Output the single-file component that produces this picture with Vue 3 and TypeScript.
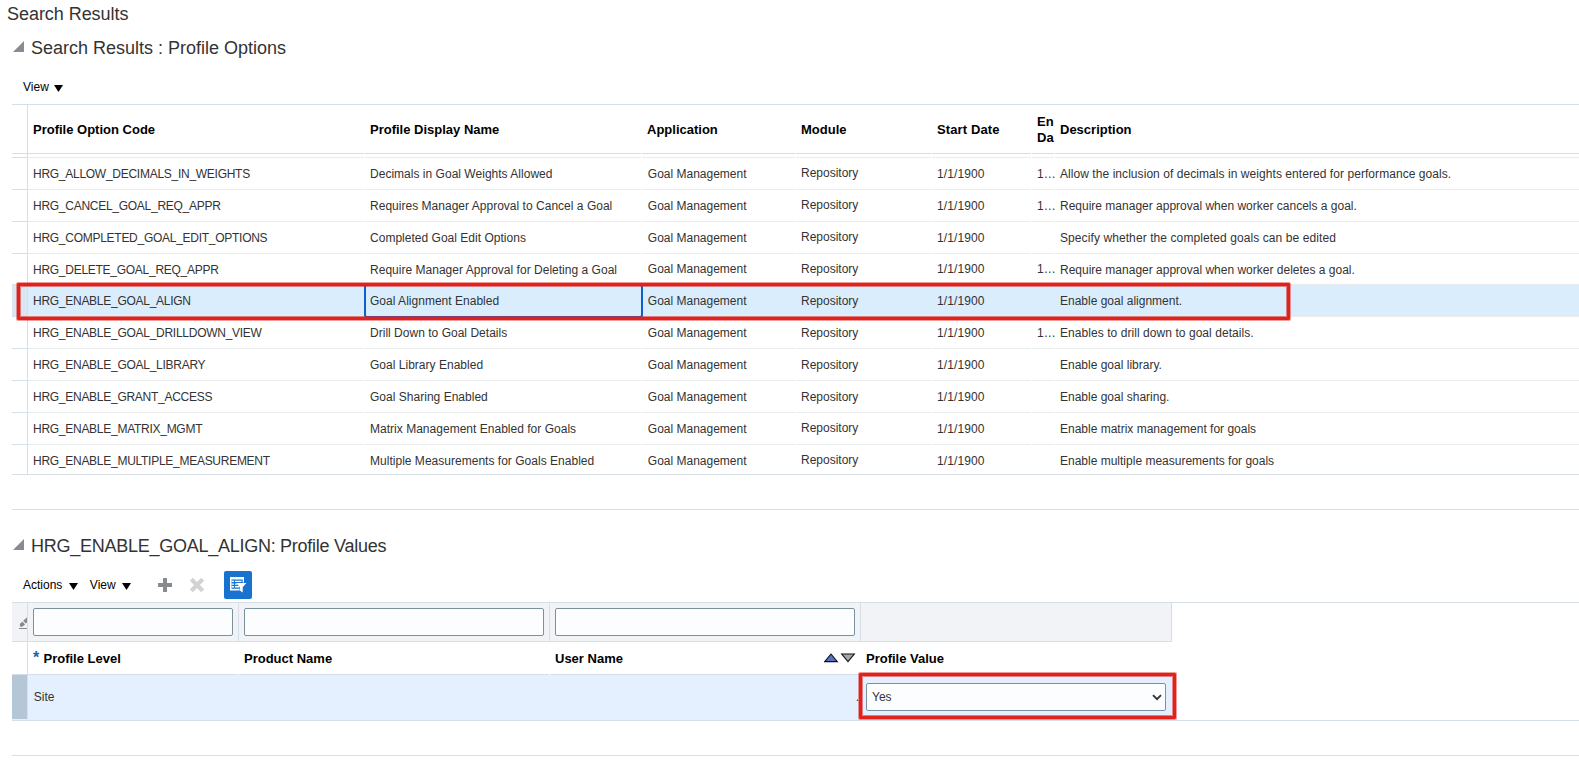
<script setup lang="ts">
import { ref } from 'vue'

interface ProfileOption {
  code: string
  name: string
  start: string
  end: string
  description: string
  tone?: string
  raised?: string[]
}

const options: ProfileOption[] = [
  { code: 'HRG_ALLOW_DECIMALS_IN_WEIGHTS', name: 'Decimals in Goal Weights Allowed', start: '1/1/1900', end: '1…', description: 'Allow the inclusion of decimals in weights entered for performance goals.', tone: 'loose', raised: ['module'] },
  { code: 'HRG_CANCEL_GOAL_REQ_APPR', name: 'Requires Manager Approval to Cancel a Goal', start: '1/1/1900', end: '1…', description: 'Require manager approval when worker cancels a goal.', raised: ['module'] },
  { code: 'HRG_COMPLETED_GOAL_EDIT_OPTIONS', name: 'Completed Goal Edit Options', start: '1/1/1900', end: '', description: 'Specify whether the completed goals can be edited', tone: 'looser', raised: ['module'] },
  { code: 'HRG_DELETE_GOAL_REQ_APPR', name: 'Require Manager Approval for Deleting a Goal', start: '1/1/1900', end: '1…', description: 'Require manager approval when worker deletes a goal.', raised: ['application', 'module', 'start', 'end'] },
  { code: 'HRG_ENABLE_GOAL_ALIGN', name: 'Goal Alignment Enabled', start: '1/1/1900', end: '', description: 'Enable goal alignment.' },
  { code: 'HRG_ENABLE_GOAL_DRILLDOWN_VIEW', name: 'Drill Down to Goal Details', start: '1/1/1900', end: '1…', description: 'Enables to drill down to goal details.', tone: 'loose' },
  { code: 'HRG_ENABLE_GOAL_LIBRARY', name: 'Goal Library Enabled', start: '1/1/1900', end: '', description: 'Enable goal library.' },
  { code: 'HRG_ENABLE_GRANT_ACCESS', name: 'Goal Sharing Enabled', start: '1/1/1900', end: '', description: 'Enable goal sharing.' },
  { code: 'HRG_ENABLE_MATRIX_MGMT', name: 'Matrix Management Enabled for Goals', start: '1/1/1900', end: '', description: 'Enable matrix management for goals', raised: ['module'] },
  { code: 'HRG_ENABLE_MULTIPLE_MEASUREMENT', name: 'Multiple Measurements for Goals Enabled', start: '1/1/1900', end: '', description: 'Enable multiple measurements for goals', raised: ['module'] },
]

const selectedCode = ref('HRG_ENABLE_GOAL_ALIGN')
const level = ref('')
const product = ref('')
const user = ref('')
const up = (o: ProfileOption, column: string) => ({ up: o.raised?.includes(column) })
</script>

<template>
  <main class="page">
    <h1 class="title">Search Results</h1>

    <section class="options">
      <h2 class="heading">
        <svg class="disclose" width="11" height="11" viewBox="0 0 11 11"><path d="M0 11 11 0V11Z" /></svg>
        Search Results : Profile Options
      </h2>
      <div class="toolbar first">
        <span class="menu">View<svg width="9" height="7" viewBox="0 0 9 7"><path d="M0 0H9L4.5 7Z" /></svg></span>
      </div>

      <div class="grid">
        <div class="row head">
          <span class="gutter"></span>
          <span class="cell">Profile Option Code</span>
          <span class="cell">Profile Display Name</span>
          <span class="cell app">Application</span>
          <span class="cell">Module</span>
          <span class="cell start">Start Date</span>
          <span class="cell end">En<br />Da</span>
          <span class="cell">Description</span>
        </div>
        <div class="row spacer">
          <span class="gutter"></span>
          <span v-for="n in 7" :key="n" class="cell"></span>
        </div>
        <div v-for="o in options" :key="o.code" class="row" :class="{ selected: o.code === selectedCode }">
          <span class="gutter"></span>
          <span class="cell code">{{ o.code }}</span>
          <span class="cell name">{{ o.name }}</span>
          <span class="cell app" :class="up(o, 'application')">Goal Management</span>
          <span class="cell" :class="up(o, 'module')">Repository</span>
          <span class="cell date" :class="up(o, 'start')">{{ o.start }}</span>
          <span class="cell" :class="up(o, 'end')">{{ o.end }}</span>
          <span class="cell" :class="o.tone">{{ o.description }}</span>
          <i v-if="o.code === selectedCode" class="marker row-marker"></i>
        </div>
      </div>
    </section>

    <section class="values">
      <h2 class="heading">
        <svg class="disclose" width="11" height="11" viewBox="0 0 11 11"><path d="M0 11 11 0V11Z" /></svg>
        <span class="code-title">{{ selectedCode }}: Profile Values</span>
      </h2>
      <div class="toolbar second">
        <span class="menu">Actions<svg width="9" height="7" viewBox="0 0 9 7"><path d="M0 0H9L4.5 7Z" /></svg></span>
        <span class="menu view">View<svg width="9" height="7" viewBox="0 0 9 7"><path d="M0 0H9L4.5 7Z" /></svg></span>
        <svg class="add" width="14" height="14" viewBox="0 0 14 14"><path d="M5 0h4v5h5v4H9v5H5V9H0V5h5Z" fill="#878b90" /></svg>
        <svg class="remove" width="16" height="16" viewBox="0 0 16 16"><path d="M2.3 2.3 13.7 13.7M13.7 2.3 2.3 13.7" stroke="#d2d3d5" stroke-width="4.2" /></svg>
        <button class="filter" type="button" aria-label="Query by example">
          <svg width="18" height="17" viewBox="0 0 18 17">
            <path d="M0 0H14V2.6H0ZM0 2H1.5V13H0ZM0 11.8H9.5V13.4H0ZM12.7 2H14V5.4H12.7Z" fill="#fff" />
            <path d="M1.5 4.4H4M5 4.4H11.6M1.5 7.1H4M5 7.1H7M1.5 9.8H4M5 9.8H9" stroke="#fff" stroke-width="1.4" />
            <path d="M6 6H16.4L12.7 10.3V15.6L9.8 13.4V10.3Z" fill="#fff" />
          </svg>
        </button>
      </div>

      <div class="vgrid">
        <div class="vrow filters">
          <span class="gutter">
            <svg width="8" height="13" viewBox="0 0 8 13">
              <path d="M0 11.5H8" stroke="#878b90" stroke-width="1" />
              <path d="M1 6.8 3.4 4.6 6 7.4 3.4 9.8H1.6L0.8 8.6Z" fill="#878b90" />
              <path d="M4.2 3.8 8 0.3V5.4L6.7 6.6Z" fill="#878b90" />
            </svg>
          </span>
          <span class="vcell"><input v-model="level" aria-label="Profile Level" /></span>
          <span class="vcell"><input v-model="product" aria-label="Product Name" /></span>
          <span class="vcell"><input v-model="user" aria-label="User Name" /></span>
          <span class="vcell"></span>
        </div>
        <div class="vrow vhead">
          <span class="gutter"></span>
          <span class="vcell"><b class="required">*</b>Profile Level</span>
          <span class="vcell">Product Name</span>
          <span class="vcell sortable">User Name
            <svg width="32" height="10" viewBox="0 0 32 10">
              <path d="M0.7 8.6 7 1 13.3 8.6Z" fill="#4f75c4" stroke="#111" stroke-width="1.1" />
              <path d="M17.7 1H30.3L24 8.6Z" fill="#a4a8ae" stroke="#111" stroke-width="1.1" />
            </svg>
          </span>
          <span class="vcell">Profile Value</span>
        </div>
        <div class="vrow body">
          <span class="gutter"></span>
          <span class="vcell site">Site</span>
          <span class="vcell"></span>
          <span class="vcell dot">.</span>
          <span class="vcell">
            <span class="select">Yes<svg width="10" height="7" viewBox="0 0 10 7"><path d="M1 1.2 5 5.2 9 1.2" fill="none" stroke="#333" stroke-width="1.9" /></svg></span>
            <i class="marker value-marker"></i>
          </span>
        </div>
      </div>
    </section>
  </main>
</template>

<style>
body {
  margin: 0;
  background: #fff;
}
</style>

<style scoped>
.page {
  box-sizing: border-box;
  width: 100%;
  height: 784px;
  padding-top: 4px;
  overflow: hidden;
  background: #fff;
  color: #333;
  font: 12px/16px "Liberation Sans", Arial, sans-serif;
}
.title,
.heading {
  margin: 0;
  font-size: 18px;
  font-weight: 400;
  line-height: 20px;
}
.title {
  padding-left: 7px;
  letter-spacing: -0.05px;
}
.options,
.values {
  margin-left: 12px;
  border-bottom: 1px solid #d6dfe6;
}
.options {
  height: 471px;
  padding-top: 14px;
}
.values {
  height: 219px;
  padding-top: 26px;
}
.heading {
  display: flex;
  align-items: center;
  gap: 7px;
  padding-left: 1px;
}
.code-title {
  letter-spacing: -0.26px;
}
.disclose {
  margin-top: -3px;
  fill: #878b92;
}
.toolbar {
  display: flex;
  align-items: center;
  padding-left: 11px;
  color: #000;
}
.first {
  height: 16px;
  padding-top: 21px;
  padding-bottom: 9px;
}
.second {
  height: 28px;
  padding-top: 15px;
  padding-bottom: 3px;
}
.menu {
  display: flex;
  align-items: center;
}
.menu svg {
  margin: 2px 0 0 5.5px;
}
.view {
  margin-left: 12px;
}
.second .menu:first-child svg,
.view svg {
  margin-left: 6.5px;
}
.add {
  margin-left: 27px;
}
.remove {
  margin-left: 17px;
}
.filter {
  display: flex;
  align-items: flex-start;
  width: 28px;
  height: 28px;
  margin-left: 19px;
  padding: 6px 0 0 6px;
  border: 0;
  border-radius: 2px;
  background: #1873d0;
}
.filter svg {
  display: block;
  flex: none;
}

.grid,
.vgrid {
  border-top: 1px solid #d6dfe6;
  border-bottom: 1px solid #d6dfe6;
}
.row {
  position: relative;
  display: grid;
  grid-template-columns: 15px 336px 276px 153px 135px 99px 22px 1fr;
  column-gap: 1px;
  height: 32px;
}
.row:nth-child(6) {
  height: 31px;
}
.row:last-child {
  height: 29px;
}
.gutter {
  box-sizing: border-box;
  width: 16px;
  border-right: 1px solid #d6dfe6;
  border-bottom: 1px solid #d6dfe6;
}
.cell {
  position: relative;
  box-sizing: border-box;
  padding: 8px 0 0 5px;
  border-bottom: 1px solid #e9ebec;
  white-space: nowrap;
}
.cell.app {
  padding-left: 5.8px;
}
.head .cell.app {
  padding-left: 5px;
}
.cell.up {
  padding-top: 7px;
}
.row:last-child .cell,
.row:last-child .gutter {
  border-bottom: 0;
}
.head {
  height: 49px;
  color: #000;
  font-size: 13px;
  font-weight: 700;
}
.head .cell {
  padding-top: 17px;
  border-color: #d6dfe6;
}
.head .start {
  letter-spacing: 0.12px;
}
.head .cell.end {
  padding-top: 9px;
}
.spacer {
  height: 4px;
}
.spacer .cell {
  padding: 0;
}
.code {
  letter-spacing: -0.27px;
}
.name {
  letter-spacing: 0.02px;
}
.date {
  letter-spacing: 0.1px;
}
.loose {
  letter-spacing: 0.06px;
}
.looser {
  letter-spacing: 0.09px;
}
.selected .cell {
  background: #daedfd;
  box-shadow: 1px 0 0 #daedfd;
}
.selected .code {
  box-shadow: none;
}
.selected .gutter {
  background: #dae7f3;
}
.selected .name::after {
  content: "";
  position: absolute;
  z-index: 1;
  top: -1px;
  right: -2px;
  bottom: -2px;
  left: -1px;
  border: 2px solid #0d5fc9;
  border-radius: 3px;
}
.marker {
  position: absolute;
  z-index: 2;
  box-sizing: border-box;
  border: 3px solid #df221d;
  border-radius: 1px;
  box-shadow: 0 0 0 1px rgba(223, 34, 29, 0.45), inset 0 0 0 1px rgba(223, 34, 29, 0.55);
}
.row-marker {
  top: -2px;
  left: 5px;
  width: 1273px;
  height: 37px;
}
.value-marker {
  top: -2px;
  left: -2px;
  width: 317px;
  height: 46px;
}

.vrow {
  display: grid;
  grid-template-columns: 15px 210px 310px 310px 310px;
  column-gap: 1px;
}
.vcell {
  position: relative;
  box-sizing: border-box;
  border-bottom: 1px solid #d6dfe6;
}
.filters {
  height: 39px;
}
.filters .gutter,
.filters .vcell {
  background: #f2f3f7;
}
.filters .vcell {
  width: calc(100% + 1px);
  padding: 5px;
  border-right: 1px solid #d6dfe6;
}
.filters .gutter svg {
  display: block;
  margin: 14px 0 0 7px;
}
.filters input {
  display: block;
  box-sizing: border-box;
  width: 100%;
  height: 28px;
  padding: 0 5px;
  border: 1px solid #7b919e;
  border-radius: 2px;
  outline: 0;
  background: #fcfdff;
  font: inherit;
}
.vhead {
  height: 33px;
  color: #000;
  font-size: 13px;
  font-weight: 700;
}
.vhead .vcell {
  display: flex;
  padding: 9px 0 0 5px;
}
.required {
  width: 10.5px;
  margin-top: -1px;
  color: #1467ab;
  font-size: 16px;
  line-height: 16px;
}
.vhead .sortable {
  justify-content: space-between;
  padding-right: 4px;
}
.sortable svg {
  margin-top: 2px;
}
.body {
  height: 45px;
}
.body .gutter {
  border-bottom-color: #e4f0ff;
  background: #b5c7d6;
}
.body .vcell {
  border-bottom: 0;
  background: #e4f0ff;
  box-shadow: 1px 0 0 #e4f0ff;
}
.body .site {
  padding: 14px 0 0 5.8px;
}
.body .dot {
  padding: 14px 1px 0 0;
  text-align: right;
}
.select {
  display: flex;
  box-sizing: border-box;
  align-items: center;
  justify-content: space-between;
  height: 28px;
  margin: 8px 5px 0;
  padding: 0 3.5px 0 5px;
  border: 1px solid #7b919e;
  border-radius: 2px;
  background: #fcfdff;
}
.select svg {
  margin-top: 1px;
}
</style>
